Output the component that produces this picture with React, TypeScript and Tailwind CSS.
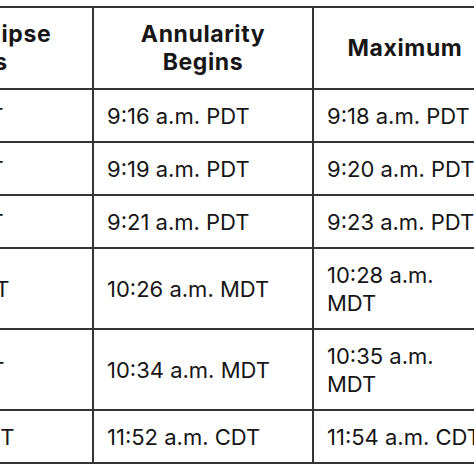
const rows: [string, string, string][] = [
  ["8:05 a.m. PDT", "9:16 a.m. PDT", "9:18 a.m. PDT"],
  ["8:08 a.m. PDT", "9:19 a.m. PDT", "9:20 a.m. PDT"],
  ["8:09 a.m. PDT", "9:21 a.m. PDT", "9:23 a.m. PDT"],
  ["9:09 a.m. MDT", "10:26 a.m. MDT", "10:28 a.m. MDT"],
  ["9:13 a.m. MDT", "10:34 a.m. MDT", "10:35 a.m. MDT"],
  ["10:23 a.m. CDT", "11:52 a.m. CDT", "11:54 a.m. CDT"],
];

const headers: [string, string][] = [
  ["Partial Eclipse", "Begins"],
  ["Annularity", "Begins"],
  ["Maximum", ""],
];

export default function App() {
  return (
    <div className="w-[474px] h-[474px] overflow-hidden bg-white pt-[6px] font-['Inter',sans-serif] text-[#161616]">
      <table className="table-fixed border-collapse ml-[-154px] w-[650px] text-[22px] leading-[28px]">
        <colgroup>
          <col className="w-[246px]" />
          <col className="w-[220px]" />
          <col className="w-[184px]" />
        </colgroup>
        <thead>
          <tr className="h-[82px]">
            {headers.map(([a, b], j) => (
              <th
                key={a}
                className={`border-2 border-[#353535] ${j === 0 ? "pl-[8px]" : "pl-[13px]"} pr-[13px] py-[12px] text-center font-bold text-[23px] tracking-[0.6px]`}
              >
                {a}
                {b && <br />}
                {b}
              </th>
            ))}
          </tr>
        </thead>
        <tbody>
          {rows.map((r, i) => (
            <tr key={i}>
              {r.map((c, j) => (
                <td
                  key={j}
                  className={`border-2 border-[#353535] ${j === 0 ? "pl-[8px]" : "pl-[13px]"} pr-[13px] py-[11.5px] text-left font-normal align-middle`}
                >
                  {c}
                </td>
              ))}
            </tr>
          ))}
        </tbody>
      </table>
    </div>
  );
}
